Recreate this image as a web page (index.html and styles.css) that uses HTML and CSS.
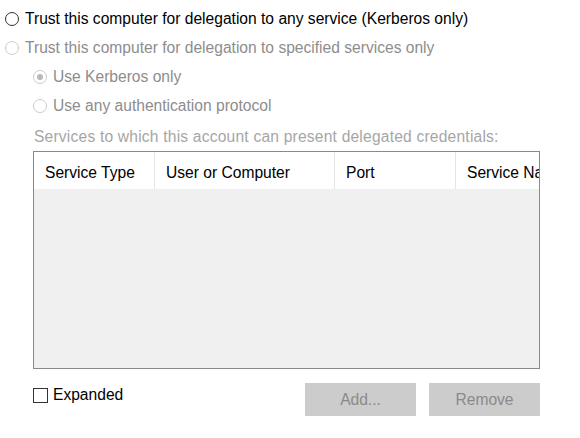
FILE: index.html
```html
<!DOCTYPE html>
<html>
<head>
<meta charset="utf-8">
<link rel="stylesheet" href="styles.css">
</head>
<body>
<div class="page">
  <div class="opt">
    <span class="radio"></span>
    <span class="txt">Trust this computer for delegation to any service (Kerberos only)</span>
  </div>
  <div class="opt disabled">
    <span class="radio"></span>
    <span class="txt">Trust this computer for delegation to specified services only</span>
  </div>
  <div class="sub">
    <div class="opt disabled">
      <span class="radio checked"></span>
      <span class="txt">Use Kerberos only</span>
    </div>
    <div class="opt disabled">
      <span class="radio"></span>
      <span class="txt">Use any authentication protocol</span>
    </div>
    <div class="label">Services to which this account can present delegated credentials:</div>
    <div class="list">
      <div class="head">
        <div class="col c1">Service Type</div>
        <div class="col c2">User or Computer</div>
        <div class="col c3">Port</div>
        <div class="col c4">Service Name</div>
      </div>
      <div class="body"></div>
    </div>
    <div class="bottom">
      <div class="check">
        <span class="box"></span>
        <span class="txt">Expanded</span>
      </div>
      <div class="buttons">
        <div class="btn">Add...</div>
        <div class="btn">Remove</div>
      </div>
    </div>
  </div>
</div>
</body>
</html>
```

FILE: styles.css
```css
html, body {
  margin: 0;
  padding: 0;
  background: #ffffff;
}
body {
  font-family: "Liberation Sans", Arial, sans-serif;
  font-size: 15.6px;
  color: #000000;
}
.page {
  padding: 4px 0 0 5px;
  width: 575px;
  height: 434px;
}
.opt {
  display: flex;
  align-items: center;
  height: 29px;
  gap: 6px;
}
.radio {
  box-sizing: border-box;
  width: 14px;
  height: 14px;
  border: 1px solid #333333;
  border-radius: 50%;
  display: flex;
  align-items: center;
  justify-content: center;
  flex: none;
}
.opt.disabled .radio {
  border-color: #cccccc;
}
.opt.disabled .txt {
  color: #8d8d8d;
}
.radio.checked::after {
  content: "";
  width: 6px;
  height: 6px;
  border-radius: 50%;
  background: #b8b8b8;
}
.sub {
  padding-left: 28px;
}
.label {
  height: 30px;
  line-height: 33px;
  color: #a6a6a6;
  margin-left: 1px;
  letter-spacing: 0.2px;
  white-space: nowrap;
}
.list {
  box-sizing: border-box;
  margin-top: 1px;
  width: 507px;
  height: 218px;
  border: 1px solid #8a8a8a;
  display: flex;
  flex-direction: column;
  overflow: hidden;
}
.head {
  display: flex;
  height: 37px;
  background: #ffffff;
  flex: none;
}
.col {
  box-sizing: border-box;
  height: 37px;
  line-height: 37px;
  padding: 2px 0 0 11px;
  border-right: 1px solid #e5e5e5;
  white-space: nowrap;
  overflow: hidden;
  flex: none;
}
.c1 { width: 121px; }
.c2 { width: 180px; }
.c3 { width: 121px; }
.c4 { width: 84px; border-right: none; }
.body {
  flex: 1;
  background: #f0f0f0;
}
.bottom {
  display: flex;
  justify-content: space-between;
  width: 507px;
  margin-top: 13px;
}
.check {
  display: flex;
  align-items: center;
  gap: 5px;
  height: 22px;
  margin-top: 2px;
}
.box {
  box-sizing: border-box;
  width: 15px;
  height: 15px;
  border: 1px solid #333333;
  background: #ffffff;
}
.buttons {
  display: flex;
  gap: 13px;
  margin-top: 1px;
}
.btn {
  width: 111px;
  height: 33px;
  line-height: 33px;
  text-align: center;
  background: #cccccc;
  color: #8a8a8a;
}
```
